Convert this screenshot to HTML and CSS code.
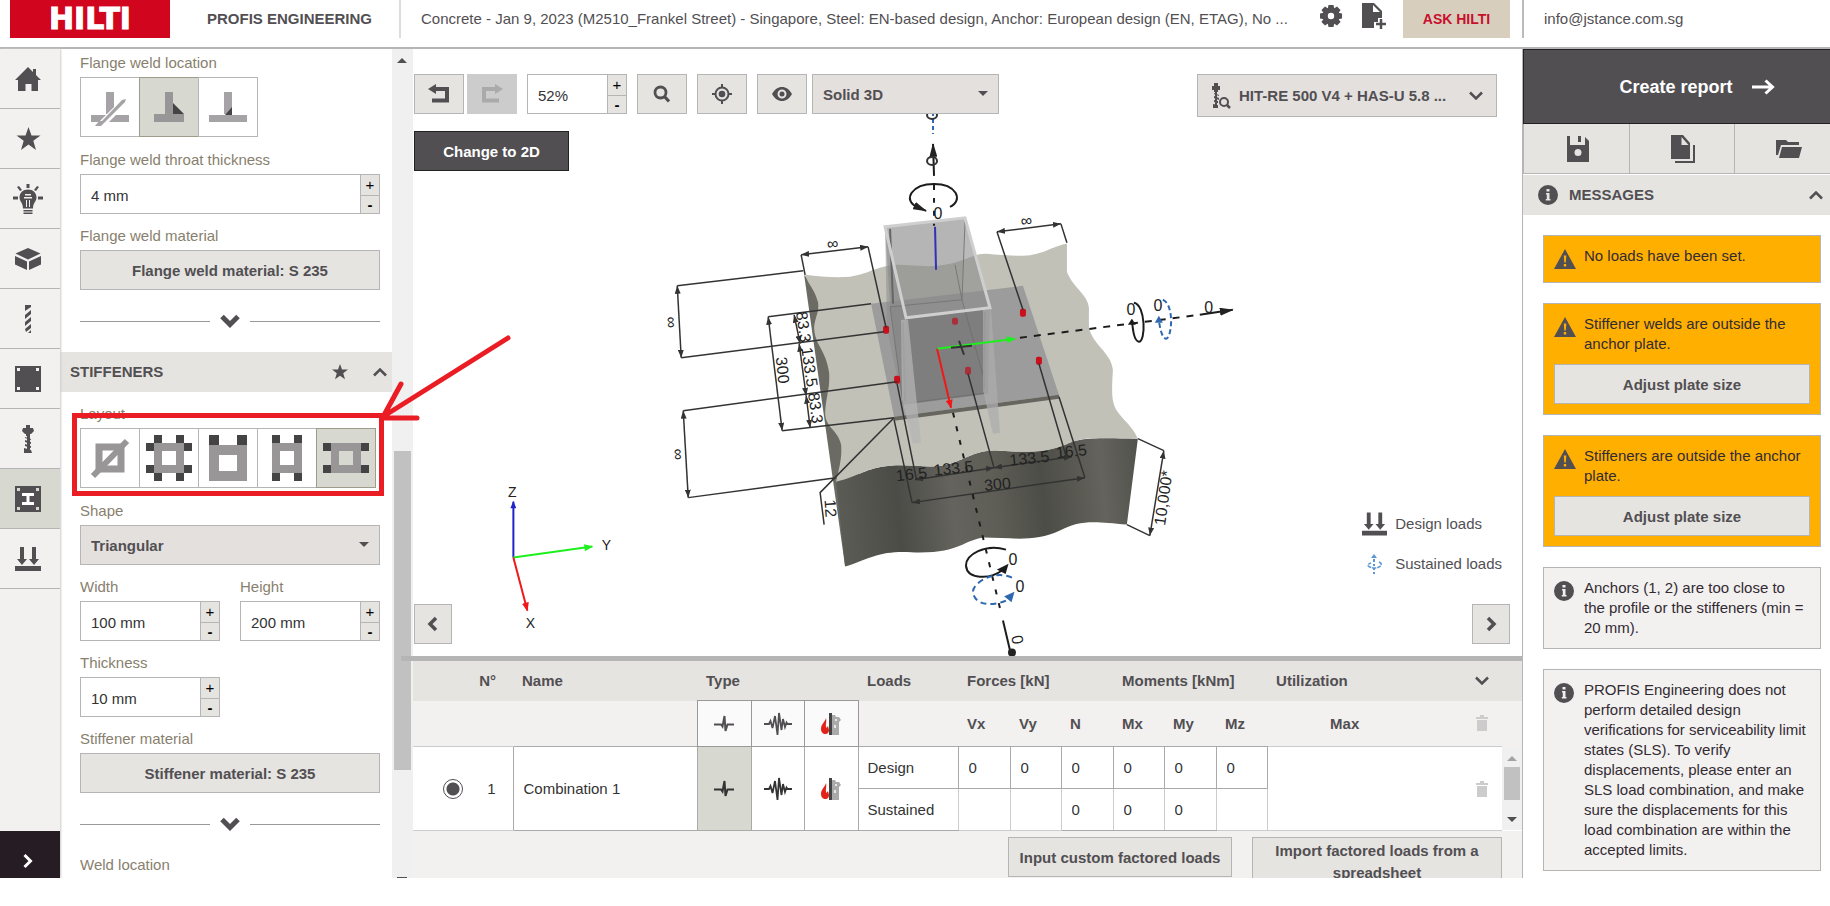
FILE: index.html
```html
<!DOCTYPE html>
<html lang="en">
<head>
<meta charset="utf-8">
<title>PROFIS Engineering</title>
<link rel="stylesheet" href="styles.css">
</head>
<body>
<svg class="defs" aria-hidden="true">
  <defs>
    <symbol id="i-loads" viewBox="0 0 26 26"><path d="M5 1h4v12h3l-5 6-5-6h3zM17 1h4v12h3l-5 6-5-6h3zM0 20h26v5H0z"/></symbol>
    <symbol id="i-plate" viewBox="0 0 26 26"><path fill-rule="evenodd" d="M0 0h26v26H0zM2 2v3h3V2zM21 2v3h3V2zM2 21v3h3v-3zM21 21v3h3v-3z"/></symbol>
    <symbol id="i-star" viewBox="0 0 24 24"><path d="M12 0l3 8.400h9l-7.200 5.400L19.500 23 12 17.500 4.500 23l2.700-9.200L0 8.400h9z"/></symbol>
    <symbol id="i-down" viewBox="0 0 20 14"><path d="M2 2.500l8 8 8-8" fill="none" stroke="currentColor" stroke-width="5"/></symbol>
    <symbol id="i-thin" viewBox="0 0 14 9"><path d="M1 1.500l6 6 6-6" fill="none" stroke="currentColor" stroke-width="2.500"/></symbol>
    <symbol id="i-warn" viewBox="0 0 22 20"><path fill-rule="evenodd" d="M11 0l11 20H0zM9.800 6.500l.5 7h1.500l.5-7zM9.800 15v2.500h2.400V15z"/></symbol>
    <symbol id="i-info" viewBox="0 0 20 20"><path fill-rule="evenodd" d="M10 0a10 10 0 1 0 0 20 10 10 0 0 0 0-20zM8.500 4h3v2.500h-3zM8 8h3.500v6h1v1.500H7.800V14h1V9.500H8z"/></symbol>
    <symbol id="i-static" viewBox="0 0 20 18"><path d="M0 9.500h7l1.500 2 2-10.500 1 15 2-6.500H20" fill="none" stroke="currentColor" stroke-width="2"/></symbol>
    <symbol id="i-seismic" viewBox="0 0 28 24"><path d="M0 12h5l1.500-3 2 7L11 4l2.500 19L15 1l2.500 17 1.500-11 2 8 1.500-4.500 1 1.500H28" fill="none" stroke="currentColor" stroke-width="1.800"/></symbol>
    <symbol id="i-fire" viewBox="0 0 20 22"><path fill="#e2231a" d="M5 5c-1 4-5 6-5 11 0 3 2 5 4.500 5S8 19 8 17l-1-4-1.500 2C4 12 6 9 5 5z"/><path fill="#444" d="M8 0h3v22H8z"/><path fill="#aaa" d="M11 2h3l1 2h3l2 3-2 2v13h-7z"/><path fill="#e8e8e8" d="M14 6h2v2h-2zM13 12h2v3h-2z"/></symbol>
    <symbol id="i-trash" viewBox="0 0 12 16"><path d="M4 0h4v2h4v2H0V2h4zM1 5h10v11H1z"/></symbol>
    <symbol id="i-anchor" viewBox="0 0 12 28"><path d="M4 0h4v3h3l1 3-3 3H8v2l-4 0V9H3L0 6l1-3h3zM3 12l6 2v1l-6-2zM3 15l6 2v2l-6-2zM3 19l6 2v2l-6-2zM2 23l7 2 1 3H2z"/><path d="M5 10h3v15H5z"/></symbol>
    <marker id="a-dim" viewBox="0 0 8 6" refX="8" refY="3" markerWidth="8" markerHeight="6" markerUnits="userSpaceOnUse" orient="auto-start-reverse"><path d="M0 0l8 3-8 3z" fill="#333"/></marker>
    <marker id="a-axis" viewBox="0 0 14 8" refX="13" refY="4" markerWidth="14" markerHeight="8" markerUnits="userSpaceOnUse" orient="auto"><path d="M0 0l14 4-14 4z" fill="#222"/></marker>
    <marker id="a-navy" viewBox="0 0 10 8" refX="9" refY="4" markerWidth="10" markerHeight="6" markerUnits="userSpaceOnUse" orient="auto"><path d="M0 0l10 4-10 4z" fill="#2222cc"/></marker>
    <marker id="a-green" viewBox="0 0 10 8" refX="9" refY="4" markerWidth="10" markerHeight="7" markerUnits="userSpaceOnUse" orient="auto"><path d="M0 0l10 4-10 4z" fill="#1df01d"/></marker>
    <marker id="a-red" viewBox="0 0 10 8" refX="9" refY="4" markerWidth="9" markerHeight="7" markerUnits="userSpaceOnUse" orient="auto"><path d="M0 0l10 4-10 4z" fill="#f01818"/></marker>
  </defs>
</svg>

<div class="app">
  <header class="header">
    <a class="logo" href="#">HILTI</a>
    <strong class="product">PROFIS ENGINEERING</strong>
    <div class="project">Concrete - Jan 9, 2023 (M2510_Frankel Street) - Singapore, Steel: EN-based design, Anchor: European design (EN, ETAG), No ...</div>
    <div class="header-tools">
      <button class="plain" aria-label="Settings"><svg width="24" height="24" viewBox="-12 -12 24 24"><path d="M-2.500-11h5l1 5h-7zM-2.500 11h5l1-5h-7zM-11-2.500v5l5 1v-7zM11-2.500v5l-5 1v-7z"/><path transform="rotate(45)" d="M-2.500-11h5l1 5h-7zM-2.500 11h5l1-5h-7zM-11-2.500v5l5 1v-7zM11-2.500v5l-5 1v-7z"/><circle r="5.700" fill="none" stroke="currentColor" stroke-width="5"/></svg></button>
      <button class="plain" aria-label="New document"><svg width="26" height="28" viewBox="0 0 26 28"><path fill-rule="evenodd" d="M1 1h12l8 8v7h-4v4h-4v6H1zM12 3v7h7z"/><path d="M20 17v10M15 22h10" fill="none" stroke="currentColor" stroke-width="2.500"/></svg></button>
      <button class="ask">ASK HILTI</button>
    </div>
    <div class="account">info@jstance.com.sg</div>
  </header>

  <div class="body">
    <nav class="rail">
      <a href="#" aria-label="Home"><svg width="26" height="24" viewBox="0 0 26 24"><path d="M13 0l5 5V2h3v6l5 5h-3v11h-6.500v-7h-6v7H3V13H0z"/></svg></a>
      <a href="#" aria-label="Favourites"><svg width="25" height="24"><use href="#i-star"/></svg></a>
      <a href="#" aria-label="Ideas"><svg width="30" height="30" viewBox="0 0 30 30"><path d="M13.500 0h3v4h-3zM0 12.500h5v3H0zM25 12.500h5v3h-5zM4 3l2-1 3 4-2 1zM26 3l-2-1-3 4 2 1zM10.500 26h9v1.500h-9zM10.500 28.500h9V30h-9z"/><path fill-rule="evenodd" d="M15 5.500c5 0 8.500 3.500 8.500 8 0 4-3.500 5-3.500 11H10c0-6-3.500-7-3.500-11 0-4.500 3.500-8 8.500-8zM12 10v1.500h6V10zM11 13v1.500h8V13zM13 16v7h1v-7zM16 16v7h1v-7z"/></svg></a>
      <a href="#" aria-label="Base material"><svg width="26" height="22" viewBox="0 0 26 22"><path d="M13 0l12.500 5.500L13 11.500.5 5.500zM0 8l12 5.500V22L0 16.500zM26 8l-12 5.500V22l12-5.500z"/></svg></a>
      <a href="#" aria-label="Drilling"><svg width="8" height="28" viewBox="0 0 8 28"><path d="M1 0h6v2L1 6zM7 5v4l-6 5v-4zM7 12v4l-6 5v-4zM7 19v4l-5 4-1-3zM4 28l3-3v3z"/></svg></a>
      <a href="#" aria-label="Anchor plate"><svg width="26" height="26"><use href="#i-plate"/></svg></a>
      <a href="#" aria-label="Anchor"><svg width="12" height="28"><use href="#i-anchor"/></svg></a>
      <a href="#" class="is-active" aria-label="Profile"><svg width="26" height="26" viewBox="0 0 26 26"><use href="#i-plate"/><path d="M7 7v3h4.500v6H7v3h12v-3h-4.500v-6H19V7z" fill="#fff"/></svg></a>
      <a href="#" aria-label="Loads"><svg width="26" height="26"><use href="#i-loads"/></svg></a>
      <button class="expand" aria-label="Expand"><svg width="10" height="16" viewBox="0 0 10 16"><path d="M1.500 2l6 6-6 6" fill="none" stroke="#fff" stroke-width="3"/></svg></button>
    </nav>

    <aside class="panel">
      <div class="fields">
        <div class="label label-tight">Flange weld location</div>
        <div class="tiles">
          <button class="tile" aria-label="No weld"><svg width="38" height="38" viewBox="0 0 38 38"><path d="M15 4h8v22h-8zM0 27h38v7H0z" fill="#a5a3a6"/><path d="M9 38L35 12" fill="none" stroke="#fff" stroke-width="7"/><path d="M4 38l4-5h3L31 12l4-1-1 3-24 24z" fill="#a5a3a6"/></svg></button>
          <button class="tile is-active" aria-label="Outer weld"><svg width="38" height="38" viewBox="0 0 38 38"><path d="M15 4h8v22h-8zM4 26h30v8H4z" fill="#989696"/><path d="M23 15l11 11H23z" fill="#444"/></svg></button>
          <button class="tile" aria-label="Inner weld"><svg width="38" height="38" viewBox="0 0 38 38"><path d="M15 4h8v22h-8zM0 27h38v7H0z" fill="#a5a3a6"/><path d="M23 19v8h-7z" fill="#444"/></svg></button>
        </div>
        <label class="label" for="throat">Flange weld throat thickness</label>
        <div class="spin"><input id="throat" value="4 mm"><button aria-label="Increase">+</button><button aria-label="Decrease">-</button></div>
        <div class="label">Flange weld material</div>
        <button class="btn wide">Flange weld material: S 235</button>
        <div class="more"><svg width="20" height="14"><use href="#i-down"/></svg></div>
      </div>

      <h2 class="section"><span>STIFFENERS</span><svg width="16" height="16"><use href="#i-star"/></svg><svg class="flip" width="14" height="9"><use href="#i-thin"/></svg></h2>

      <div class="fields">
        <div class="label">Layout</div>
        <div class="tiles">
          <button class="tile" aria-label="None"><svg width="46" height="46" viewBox="0 0 46 46"><path d="M12 12h22v22H12z" fill="none" stroke="#989696" stroke-width="7"/><path d="M6 41L40 6" stroke="#989696" stroke-width="6"/></svg></button>
          <button class="tile" aria-label="All sides"><svg width="46" height="46" viewBox="0 0 46 46"><path d="M12 12h22v22H12z" fill="none" stroke="#989696" stroke-width="8"/><path fill="#444" d="M8 0h8v8H8zM30 0h8v8h-8zM0 8h8v8H0zM38 8h8v8h-8zM0 30h8v8H0zM38 30h8v8h-8zM8 38h8v8H8zM30 38h8v8h-8z"/></svg></button>
          <button class="tile" aria-label="Top flange"><svg width="46" height="46" viewBox="0 0 46 46"><path d="M9 15h28v26H9z" fill="none" stroke="#989696" stroke-width="10"/><path fill="#444" d="M4 0h10v10H4zM32 0h10v10H32z"/></svg></button>
          <button class="tile" aria-label="Vertical"><svg width="46" height="46" viewBox="0 0 46 46"><path d="M12 12h22v22H12z" fill="none" stroke="#989696" stroke-width="8"/><path fill="#444" d="M8 0h8v8H8zM30 0h8v8h-8zM8 38h8v8H8zM30 38h8v8h-8z"/></svg></button>
          <button class="tile is-active" aria-label="Horizontal"><svg width="46" height="46" viewBox="0 0 46 46"><path d="M12 12h22v22H12z" fill="none" stroke="#989696" stroke-width="8"/><path fill="#444" d="M0 8h8v8H0zM38 8h8v8h-8zM0 30h8v8H0zM38 30h8v8h-8z"/></svg></button>
        </div>
        <label class="label" for="shape">Shape</label>
        <div class="select"><select id="shape"><option>Triangular</option></select></div>
        <div class="pair">
          <div><label class="label" for="w">Width</label><div class="spin"><input id="w" value="100 mm"><button aria-label="Increase">+</button><button aria-label="Decrease">-</button></div></div>
          <div><label class="label" for="h">Height</label><div class="spin"><input id="h" value="200 mm"><button aria-label="Increase">+</button><button aria-label="Decrease">-</button></div></div>
          <div><label class="label" for="th">Thickness</label><div class="spin"><input id="th" value="10 mm"><button aria-label="Increase">+</button><button aria-label="Decrease">-</button></div></div>
        </div>
        <div class="label">Stiffener material</div>
        <button class="btn wide">Stiffener material: S 235</button>
        <div class="more"><svg width="20" height="14"><use href="#i-down"/></svg></div>
        <div class="label">Weld location</div>
      </div>
    </aside>
    <div class="track"><i class="up"></i><i class="thumb"></i><i class="end"></i></div>

    <main class="main">
      <section class="view">
        <svg class="scene" viewBox="413 49 1109 607" aria-label="3D model">
          <defs>
            <linearGradient id="front" gradientUnits="userSpaceOnUse" x1="836" y1="500" x2="1138" y2="470">
              <stop offset="0" stop-color="#5c5c56"/><stop offset=".2" stop-color="#4b4c46"/><stop offset=".38" stop-color="#64635d"/><stop offset=".52" stop-color="#5e5e57"/><stop offset=".68" stop-color="#4c4d46"/><stop offset=".88" stop-color="#64635d"/><stop offset="1" stop-color="#53534d"/>
            </linearGradient>
          </defs>
          <path d="M804 275L845 567L860 480L841 320Z" fill="#6b6b64"/>
          <path d="M836 482C860 476 866 468 890 466C915 464 932 470 950 464C970 458 975 450 1000 451C1030 453 1045 452 1062 446C1080 438 1090 438 1138 439L1127 525C1095 522 1080 520 1060 531C1035 543 1010 538 984 538C965 540 960 553 920 553C880 550 875 557 845 567Z" fill="url(#front)"/>
          <path d="M805 275C820 277 835 278 850 277C870 274 878 265 900 265C925 266 930 268 950 264C970 259 975 254 985 254C1000 255 1010 256 1023 256C1045 255 1050 247 1067 244V272C1073 288 1088 295 1089 308V327C1092 345 1111 352 1113 370C1112 390 1111 402 1117 411C1123 420 1133 427 1138 439C1090 438 1084 437 1066 445C1045 453 1030 453 1000 451C975 450 970 458 950 464C932 470 915 464 890 466C866 468 860 476 836 482C839 468 842 460 841 445C838 430 825 428 825 413C826 395 830 390 829 373C826 350 814 345 814 327C815 317 819 313 818 303C815 290 808 285 805 275Z" fill="#c1c1b8"/>
          <path d="M871 304L1023 286L1059 395L894 417Z" fill="#9c9c9c"/>
          <path d="M894 417L1059 395V399L894 421Z" fill="#66665f"/>
          <path d="M885 227L965 218L962 300L890 307Z" fill="#888" fill-opacity=".62"/>
          <path d="M885 227L906 318L903 405L887 330Z" fill="#8c8c8c" fill-opacity=".55"/>
          <path d="M965 218L990 308L988 394L962 300Z" fill="#8c8c8c" fill-opacity=".6"/>
          <path d="M906 318L990 308L988 394L903 405Z" fill="#6e6e6e" fill-opacity=".55"/>
          <path d="M890 307L962 300L988 394L903 405Z" fill="#777" fill-opacity=".35"/>
          <path d="M890 307L962 300L988 393L903 404Z" fill="none" stroke="#666" stroke-opacity=".6"/>
          <path d="M962 300L965 222M955 265L962 300" stroke="#777" fill="none"/>
          <path d="M890 229L893 304M903 323L905 402M985 312L984 390" stroke="#666" stroke-width="2" fill="none"/>
          <path d="M901 320L908 320L921 443L913 444L902 400Z" fill="#b4b4b6" fill-opacity=".75"/>
          <path d="M983 310L991 309L1000 433L993 434L983 390Z" fill="#acacae" fill-opacity=".75"/>
          <path d="M885 227L965 218L990 308L906 318Z" fill="none" stroke="#cfcfcf" stroke-width="3"/>

          <g fill="#c9101b"><rect x="883" y="326" width="6" height="8" rx="2"/><rect x="894" y="376" width="6" height="8" rx="2"/><rect x="1020" y="309" width="6" height="8" rx="2"/><rect x="1036" y="357" width="6" height="8" rx="2"/></g>
          <g fill="#a93039"><rect x="952" y="318" width="6" height="7" rx="2"/><rect x="965" y="367" width="6" height="8" rx="2"/></g>
          <path d="M937 349L1015 339" stroke="#1df01d" stroke-width="2" marker-end="url(#a-green)"/>
          <path d="M951 348L972 346M959 341L964 355" stroke="#333" stroke-width="2"/>
          <path d="M937 349L951 408" stroke="#f01818" stroke-width="2" marker-end="url(#a-red)"/>
          <path d="M935 227L936 270" stroke="#3232b4" stroke-width="2"/>

          <g fill="none" stroke="#333" stroke-width="1.500">
            <g marker-start="url(#a-dim)" marker-end="url(#a-dim)">
              <path d="M801 255L868 247"/><path d="M677 286L681 358"/><path d="M768 317L782 431"/><path d="M794 315L800 344"/><path d="M799 344L806 396"/><path d="M806 396L810 428"/><path d="M683 411L688 498"/><path d="M912 503L1085 478"/><path d="M915 480L994 468"/><path d="M994 468L1072 457"/><path d="M1164 451L1150 536"/><path d="M997 232L1061 224"/>
            </g>
            <path d="M801 255L805 275M868 247L886 328M677 286L803 271M681 358L884 332M768 317L871 304M782 431L894 418M683 411L897 382M688 498L836 478M894 418L820 493L824 525M894 420L912 503M897 384L916 478M1059 397L1085 478M1039 364L1066 456M968 374L994 468M1138 439L1164 451M1127 525L1150 536M997 232L1023 310M1061 224L1067 243"/>
          </g>
          <g fill="none" stroke="#1c1c1c" stroke-width="2">
            <path d="M1020 338L1200 315" stroke-dasharray="7 7"/><path d="M1200 315L1233 310" marker-end="url(#a-axis)"/>
            <path d="M953 413L1002 617" stroke-dasharray="5 9"/><path d="M1003 621L1011 655"/>
            <path d="M934 185V226" stroke-dasharray="5 8"/><path d="M934 176L933 144" marker-end="url(#a-axis)"/>
            <path d="M950 207C964 200 956 184 934 184C912 184 902 200 917 207"/><path d="M917 207L926 211" marker-end="url(#a-axis)"/>
            <path d="M1134 303C1146 305 1146 342 1139 342C1134 341 1133 330 1132 320"/><path d="M1132 319l-4 6h8z" fill="#1c1c1c" stroke="none"/>
            <path d="M1006 550C985 544 966 555 966 566C967 580 990 580 1002 571"/><path d="M999 570l8-4-2 7z" fill="#1c1c1c"/>
          </g>
          <circle cx="1012" cy="653" r="4" fill="#222"/>
          <g fill="none" stroke="#2f68b0" stroke-width="2">
            <path d="M933 112V134" stroke-dasharray="4 3"/>
            <path d="M1163 300C1175 305 1172 339 1166 339C1162 338 1160 328 1159 320" stroke-dasharray="5 3"/><path d="M1159 316l-4 7h8z" fill="#2f68b0" stroke="none"/>
            <path d="M1012 578C995 570 973 583 973 592C974 607 995 607 1008 600" stroke-dasharray="6 4"/><path d="M1006 597l7-3-2 7z" fill="#2f68b0"/>
          </g>
          <g fill="none" stroke="#333" stroke-width="2"><ellipse cx="932" cy="115" rx="5" ry="4"/><ellipse cx="932" cy="161" rx="5" ry="4"/></g>
          <g class="dims" text-anchor="middle">
            <text x="938" y="219">0</text><text x="1131" y="315">0</text><text x="1158" y="311">0</text><text x="1209" y="313">0</text>
            <text x="1013" y="565">0</text><text x="1020" y="592">0</text><text transform="translate(1012 641) rotate(80)">0</text>
            <text x="833" y="249" transform="rotate(-6 833 249)">∞</text><text x="1027" y="226" transform="rotate(-6 1027 226)">∞</text>
            <text transform="translate(666 323) rotate(86)">∞</text><text transform="translate(673 455) rotate(86)">∞</text>
            <text transform="translate(777 371) rotate(84)">300</text>
            <text transform="translate(798 328) rotate(82)">83.3</text><text transform="translate(804 368) rotate(82)">133.5</text><text transform="translate(810 409) rotate(82)">83.3</text>
            <text transform="translate(825 509) rotate(86)">12</text>
            <text transform="translate(912 480) rotate(-6)">16.5</text><text transform="translate(954 474) rotate(-6)">133.5</text><text transform="translate(1030 464) rotate(-6)">133.5</text><text transform="translate(1072 457) rotate(-6)">16.5</text>
            <text transform="translate(998 490) rotate(-6)">300</text>
            <text transform="translate(1169 499) rotate(-82)">10,000*</text>
          </g>
          <g fill="none" stroke-width="2"><path d="M513 558V502" stroke="#2222cc" marker-end="url(#a-navy)"/><path d="M513 558L592 547" stroke="#1df01d" marker-end="url(#a-green)"/><path d="M513 558L527 611" stroke="#f01818" marker-end="url(#a-red)"/></g>
          <g class="axes" text-anchor="middle"><text x="512" y="497">Z</text><text x="606" y="550">Y</text><text x="530" y="628">X</text></g>
        </svg>

        <div class="toolbar">
          <div class="history">
            <button class="btn tool" aria-label="Undo"><svg width="22" height="20" viewBox="0 0 22 20"><path d="M6 5h13v11.500H4" fill="none" stroke="currentColor" stroke-width="4"/><path d="M8 0v10L0 5z"/></svg></button>
            <button class="btn tool" disabled aria-label="Redo"><svg width="22" height="20" viewBox="0 0 22 20"><path d="M16 5H3v11.500h15" fill="none" stroke="currentColor" stroke-width="4"/><path d="M14 0v10l8-5z"/></svg></button>
          </div>
          <div class="spin zoom"><input aria-label="Zoom" value="52%"><button aria-label="Increase">+</button><button aria-label="Decrease">-</button></div>
          <button class="btn tool" aria-label="Search"><svg width="18" height="18" viewBox="0 0 18 18"><circle cx="7.500" cy="7.500" r="5.500" fill="none" stroke="currentColor" stroke-width="2.800"/><path d="M11 11l5 5.500" stroke="currentColor" stroke-width="3.200"/></svg></button>
          <button class="btn tool" aria-label="Center"><svg width="20" height="20" viewBox="0 0 20 20"><circle cx="10" cy="10" r="6.500" fill="none" stroke="currentColor" stroke-width="2"/><circle cx="10" cy="10" r="3.300"/><path d="M10 0v4M10 16v4M0 10h4M16 10h4" stroke="currentColor" stroke-width="2"/></svg></button>
          <div class="display">
            <button class="btn tool" aria-label="Visibility"><svg width="20" height="14" viewBox="0 0 20 14"><path fill-rule="evenodd" d="M10 0c4 0 7.500 2.500 10 7-2.500 4.500-6 7-10 7S2.500 11.500 0 7c2.500-4.500 6-7 10-7zM10 2.500a4.500 4.500 0 1 0 0 9 4.500 4.500 0 0 0 0-9z"/><circle cx="10" cy="7" r="2.500"/></svg></button>
            <div class="select"><select aria-label="Display mode"><option>Solid 3D</option></select></div>
          </div>
          <button class="btn product-pick"><svg width="20" height="26" viewBox="0 0 20 26"><path d="M3 0h4v3h2v4H7v2H3V7H1V3h2zM3 10l5 2v1l-5-2zM3 13l5 2v2l-5-2zM3 17l4 1v2l-4-1zM2 21l5 1v3H2zM4 9h2v13H4z"/><circle cx="13" cy="19" r="4" fill="none" stroke="currentColor" stroke-width="2"/><path d="M16 22l3 3" stroke="currentColor" stroke-width="2.500"/></svg><span>HIT-RE 500 V4 + HAS-U 5.8 ...</span><svg width="14" height="9"><use href="#i-thin"/></svg></button>
        </div>
        <button class="btn dark mode">Change to 2D</button>
        <div class="legend">
          <svg width="25" height="26"><use href="#i-loads"/></svg><span>Design loads</span>
          <svg width="25" height="20" viewBox="0 0 25 20"><g fill="none" stroke="#5a96d6" stroke-width="2"><path d="M12 5v3M12 10v2M12 14v2M12 18v2"/><path d="M17 8c5 2 1 6-4 6-6 0-10-3-4-5" stroke-width="1.500" stroke-dasharray="4 1"/></g><path d="M9 4h6l-3-4z" fill="#5a96d6"/></svg><span>Sustained loads</span>
        </div>
        <div class="pager">
          <button class="btn" aria-label="Previous"><svg width="12" height="16" viewBox="0 0 10 16"><path d="M8 2L2 8l6 6" fill="none" stroke="currentColor" stroke-width="3.500"/></svg></button>
          <button class="btn" aria-label="Next"><svg width="12" height="16" viewBox="0 0 10 16"><path d="M2 2l6 6-6 6" fill="none" stroke="currentColor" stroke-width="3.500"/></svg></button>
        </div>
      </section>

      <div class="splitter"></div>

      <table class="loads">
        <colgroup><col class="c60"><col class="c40"><col class="cname"><col class="c54"><col class="c53"><col class="c54"><col class="c100"><col class="c52"><col class="c51"><col class="c52"><col class="c51"><col class="c52"><col class="c51"><col><col class="c40"><col class="c20"></colgroup>
        <thead>
          <tr class="titles"><th></th><th class="num">N°</th><th>Name</th><th colspan="3">Type</th><th>Loads</th><th colspan="3">Forces [kN]</th><th colspan="3">Moments [kNm]</th><th>Utilization</th><th class="mid"><svg width="14" height="9"><use href="#i-thin"/></svg></th><th></th></tr>
          <tr class="subs"><th colspan="3"></th><th class="ty"><svg width="20" height="18"><use href="#i-static"/></svg></th><th class="ty"><svg width="28" height="24"><use href="#i-seismic"/></svg></th><th class="ty"><svg width="20" height="22"><use href="#i-fire"/></svg></th><th></th><th>Vx</th><th>Vy</th><th>N</th><th>Mx</th><th>My</th><th>Mz</th><th class="max">Max</th><th class="mid faint"><svg width="12" height="16"><use href="#i-trash"/></svg></th><th></th></tr>
        </thead>
        <tbody>
          <tr><td rowspan="2" class="mid pick"><input type="radio" name="combo" checked aria-label="Combination 1"></td><td rowspan="2" class="num">1</td><td rowspan="2" class="box name"><input aria-label="Name" value="Combination 1"></td>
            <td rowspan="2" class="box mid is-active"><svg width="20" height="18"><use href="#i-static"/></svg></td><td rowspan="2" class="box mid"><svg width="28" height="24"><use href="#i-seismic"/></svg></td><td rowspan="2" class="box mid"><svg width="20" height="22"><use href="#i-fire"/></svg></td>
            <td class="box">Design</td><td class="box"><input aria-label="Vx" value="0"></td><td class="box"><input aria-label="Vy" value="0"></td><td class="box"><input aria-label="N" value="0"></td><td class="box"><input aria-label="Mx" value="0"></td><td class="box"><input aria-label="My" value="0"></td><td class="box"><input aria-label="Mz" value="0"></td>
            <td rowspan="2"></td><td rowspan="2" class="mid faint"><svg width="12" height="16"><use href="#i-trash"/></svg></td><td rowspan="2" class="vbar"><div class="track small"><i class="up"></i><i class="thumb"></i><i class="down"></i></div></td></tr>
          <tr><td class="box">Sustained</td><td></td><td></td><td class="box"><input aria-label="Sustained N" value="0"></td><td class="box"><input aria-label="Sustained Mx" value="0"></td><td class="box"><input aria-label="Sustained My" value="0"></td><td></td></tr>
        </tbody>
      </table>

      <footer class="actions">
        <button class="btn custom">Input custom factored loads</button>
        <button class="btn import">Import factored loads from a spreadsheet</button>
      </footer>
    </main>

    <aside class="side">
      <button class="report">Create report <svg width="23" height="16" viewBox="0 0 23 16"><path d="M0 8h20M13.500 1.500L20.500 8l-7 6.500" fill="none" stroke="#fff" stroke-width="3"/></svg></button>
      <div class="files">
        <button aria-label="Save"><svg width="24" height="26" viewBox="0 0 24 26"><path fill-rule="evenodd" d="M1 0h3v9h15V1l4 4v21H1zM12 13a3.500 3.500 0 1 0 0 7 3.500 3.500 0 0 0 0-7zM12 0h3v6h-3z"/></svg></button>
        <button aria-label="Copy"><svg width="26" height="28" viewBox="0 0 26 28"><path fill-rule="evenodd" d="M1 0h12l7 8v16H1zM11.500 2v8h7z"/><path d="M24 10v17H5" fill="none" stroke="currentColor" stroke-width="2"/></svg></button>
        <button aria-label="Open"><svg width="26" height="18" viewBox="0 0 26 18"><path d="M0 0h10l2 2h11v3H5L2 15H0zM6 7h20l-3 11H3z"/></svg></button>
      </div>
      <h2 class="section messages-head"><svg width="20" height="20"><use href="#i-info"/></svg><span>MESSAGES</span><svg class="flip" width="14" height="9"><use href="#i-thin"/></svg></h2>
      <div class="cards">
        <div class="card warn"><svg width="22" height="20"><use href="#i-warn"/></svg><p>No loads have been set.</p></div>
        <div class="card warn"><svg width="22" height="20"><use href="#i-warn"/></svg><p>Stiffener welds are outside the anchor plate.</p><button class="btn">Adjust plate size</button></div>
        <div class="card warn"><svg width="22" height="20"><use href="#i-warn"/></svg><p>Stiffeners are outside the anchor plate.</p><button class="btn">Adjust plate size</button></div>
        <div class="card"><svg width="20" height="20"><use href="#i-info"/></svg><p>Anchors (1, 2) are too close to the profile or the stiffeners (min = 20 mm).</p></div>
        <div class="card"><svg width="20" height="20"><use href="#i-info"/></svg><p>PROFIS Engineering does not perform detailed design verifications for serviceability limit states (SLS). To verify displacements, please enter an SLS load combination, and make sure the displacements for this load combination are within the accepted limits.</p></div>
      </div>
    </aside>
  </div>

  <svg class="markup" width="520" height="510" aria-hidden="true"><g fill="none" stroke="#ea1c24" stroke-width="5" stroke-linecap="round"><path d="M74.500 415.500H381.500V493.500H74.500Z" stroke-linecap="butt"/><path d="M508 338L384 416M401 384L383 417M383 418H417"/></g></svg>
</div>
</body>
</html>
```
FILE: styles.css
```css
* { box-sizing: border-box; }
body { margin: 0; background: #fff; color: #524f53; font: 15px/20px "Liberation Sans", Arial, sans-serif; }
button, input, select { font: inherit; color: inherit; border-radius: 0; }
button { padding: 0; border: 0; background: none; }
svg { fill: currentColor; flex: none; display: block; }
h2, p { margin: 0; }
.defs { position: absolute; width: 0; height: 0; }
.app { position: relative; display: flex; flex-direction: column; height: calc(100vh - 28px); overflow: hidden; }

.header { display: flex; height: 49px; flex: none; border-bottom: 2px solid #b5b5b5; padding: 0 0 9px 10px; align-items: stretch; line-height: 38px; white-space: nowrap; }
.logo { width: 160px; background: #d2051e; color: #fff; text-align: center; text-decoration: none; font: bold 30px/38px "DejaVu Sans", sans-serif; -webkit-text-stroke: 1px #fff; }
.product { width: 231px; padding-left: 37px; border-right: 2px solid #ddd; }
.project { flex: 1; min-width: 0; padding-left: 20px; overflow: hidden; }
.header-tools { display: flex; gap: 18px; align-items: stretch; padding-right: 12px; }
.plain { padding-bottom: 6px; }
.ask { width: 107px; margin-left: -2px; background: #d7cebd; color: #c8102e; font-weight: bold; font-size: 14px; padding-bottom: 4px; }
.account { width: 308px; padding-left: 20px; border-left: 2px solid #bbb; }

.body { flex: 1; min-height: 0; display: grid; grid-template-columns: 60px 332px 21px minmax(0, 1fr) 308px; }
.rail { display: flex; flex-direction: column; background: #f2f1ef; overflow: hidden; box-shadow: 1px 0 2px #ccc; z-index: 1; }
.rail a { display: flex; height: 60px; flex: none; align-items: center; justify-content: center; color: #524f53; border-bottom: 1px solid #b5b5b5; padding-right: 4px; }
.rail .is-active { background: #d7d8d0; }
.expand { margin: auto 0 -13px; height: 60px; flex: none; background: #261c24; display: flex; align-items: center; justify-content: center; padding-right: 4px; }

.panel { overflow: hidden; }
.fields { padding: 0 12px 0 20px; }
.label { display: block; padding: 12px 0 4px; color: #887f6e; }
.label-tight { padding-top: 4px; }
.more + .label { padding-top: 0; }
.tiles { display: flex; margin-bottom: 1px; padding-right: 5px; }
.tile { width: 60px; height: 60px; margin-right: -1px; border: 1px solid #b5b5b5; display: flex; align-items: center; justify-content: center; background: #fff; }
.tile.is-active { background: #d7d8d0; border-color: #a09c8c; }
.spin { display: grid; grid-template: 20px 20px / minmax(0, 1fr) 19px; border: 1px solid #b5b5b5; height: 40px; background: #fff; overflow: hidden; }
.spin input { grid-row: span 2; width: 100%; height: 38px; border: 0; padding: 2px 10px 0; background: none; color: #333; }
.spin button { background: #e5e4e0; border-left: 1px solid #b5b5b5; color: #000; line-height: 20px; }
.spin button:last-child { border-top: 1px solid #b5b5b5; height: 19px; line-height: 16px; font-weight: bold; }
.btn { display: flex; align-items: center; justify-content: center; height: 40px; border: 1px solid #b5b5b5; background: #e5e4e0; font-weight: bold; padding-top: 1px; }
.wide { width: 100%; padding-top: 2px; }
.more { display: flex; align-items: center; gap: 10px; height: 62px; }
.more::before, .more::after { content: ""; flex: 1; border-top: 1px solid #999; }
.section { display: flex; align-items: center; height: 40px; background: #e5e4e0; font-size: 15px; gap: 25px; padding: 0 5px 0 10px; }
.section span { flex: 1; }
.flip { transform: rotate(180deg); }
.select { position: relative; }
.select select { appearance: none; width: 100%; height: 40px; border: 1px solid #b5b5b5; background: #e4e0de; font-weight: bold; padding: 2px 10px 0; display: block; }
.select::after { content: ""; position: absolute; right: 11px; top: 17px; border: 5px solid transparent; border-top-color: #524f53; border-bottom: 0; }
.pair { display: grid; grid-template-columns: 1fr 1fr; column-gap: 20px; }
.track { position: relative; background: #f0f0f0; }
.track i { position: absolute; left: 5px; border: 5px solid transparent; }
.track .up { top: 9px; border-top: 0; border-bottom-color: #505050; }
.track .thumb { left: 2px; right: 2px; top: 402px; height: 319px; border: 0; background: #c1c1c1; }
.track .end { bottom: 0; border: 0; width: 10px; height: 1px; background: #505050; }

.main { display: flex; flex-direction: column; min-width: 0; background: #f2f1ef; }
.view { position: relative; flex: 1; min-height: 0; display: flex; flex-direction: column; align-items: flex-start; background: #fff; padding: 25px 25px 12px 1px; }
.view > div, .view > button { position: relative; }
.scene { position: absolute; inset: 0; width: 100%; height: 100%; }
.dims, .axes { font-size: 16px; fill: #222; }
.axes { font-size: 14px; }
.toolbar { display: flex; gap: 10px; align-self: stretch; height: 40px; }
.history { display: flex; gap: 3px; }
.tool { width: 50px; padding: 0; }
.tool:disabled { background: #ccc; border-color: #ccc; color: #aaa; }
.zoom { width: 100px; }
.display { display: flex; gap: 5px; }
.display .select { width: 187px; }
.product-pick { width: 300px; height: 43px; margin-left: auto; background: #e4e0de; padding: 0 13px; gap: 8px; }
.product-pick span { flex: 1; text-align: left; white-space: nowrap; }
.dark { background: #524f53; border-color: #222; color: #fff; }
.mode { width: 155px; margin-top: 17px; }
.legend { display: grid; grid-template-columns: 25px auto; gap: 14px 8px; margin: auto -5px 0 auto; align-items: center; justify-items: start; padding-bottom: 27px; line-height: 26px; }
.pager { display: flex; align-self: stretch; justify-content: space-between; margin-right: -13px; }
.pager .btn { width: 38px; }
.splitter { height: 5px; margin-left: -12px; background: #b5b5b5; position: relative; }

.loads { width: 100%; table-layout: fixed; border-collapse: collapse; }
.loads th, .loads td { padding: 1px 0 0 9px; text-align: left; }
.c60 { width: 60px; } .c40 { width: 40px; } .cname { width: 184px; } .c54 { width: 54px; } .c53 { width: 53px; } .c100 { width: 100px; } .c52 { width: 52px; } .c51 { width: 51px; } .c20 { width: 20px; }
.titles { height: 40px; background: #e5e4e0; white-space: nowrap; }
.loads .num { text-align: right; padding-right: 17px; padding-left: 0; }
.loads .mid, .loads .ty { padding: 0; }
.mid svg, .ty svg { margin: 0 auto; }
.subs { height: 46px; }
.loads .ty { background: #fafafa; border: 1px solid #999; }
.loads .max { padding-left: 63px; }
.faint { color: #ccc; }
.loads tbody tr { height: 42px; background: #fff; color: #333; }
.loads td { border-top: 1px solid #ccc; border-bottom: 1px solid #ccc; }
.loads tbody tr:last-child td { border-left: 1px solid #ccc; border-right: 1px solid #ccc; }
.loads tbody td.box { border: 1px solid #aaa; }
.loads td.is-active { background: #d7d8d0; }
.loads td input { width: 100%; border: 0; background: none; padding: 0 1px; display: block; }
.loads td.pick { padding-left: 20px; }
.loads td input[type="radio"] { appearance: none; width: 20px; height: 20px; margin: 0 auto; border: 1px solid #524f53; border-radius: 50%; background: radial-gradient(circle, #524f53 6px, #fff 7px); }
.loads td.vbar { padding: 0; border: 0; }
.loads .mid.faint { color: #ccc; }
.small { height: 83px; }
.small .up { border-bottom-color: #a3a3a3; }
.small .thumb { top: 20px; height: 33px; }
.small .down { bottom: 8px; border-bottom: 0; border-top-color: #505050; }
.actions { display: flex; justify-content: flex-end; align-items: flex-start; gap: 20px; height: 47px; padding: 6px 20px 0; overflow: hidden; }
.custom { width: 224px; }
.import { width: 250px; height: 50px; padding: 0 12px; line-height: 22px; }

.side { border-left: 1px solid #b5b5b5; overflow: hidden; }
.report { width: 100%; height: 75px; display: flex; align-items: center; justify-content: center; gap: 19px; padding-left: 40px; background: #524f53; border: 1px solid #222; border-right: 0; color: #fff; font-weight: bold; font-size: 18px; }
.files { display: grid; grid-template-columns: 106px 105px 106px; height: 50px; background: #e5e4e0; border-bottom: 1px solid #b5b5b5; margin-bottom: 1px; }
.files button { display: flex; align-items: center; justify-content: center; border-left: 1px solid #b5b5b5; padding-left: 2px; }
.messages-head { gap: 11px; padding: 0 7px 0 15px; }
.cards { display: flex; flex-direction: column; gap: 20px; padding: 20px 9px 0 20px; }
.card { display: grid; grid-template-columns: 20px 1fr; column-gap: 10px; border: 1px solid #b5b5b5; background: #f2f1ef; padding: 10px; min-height: 48px; align-items: start; }
.card svg { margin-top: 3px; }
.card p { color: #332b33; padding-right: 4px; }
.card .btn { grid-column: 1 / -1; margin-top: 10px; }
.warn { background: #ffaf00; }
.markup { position: absolute; left: 0; top: 0; pointer-events: none; z-index: 2; }
```
